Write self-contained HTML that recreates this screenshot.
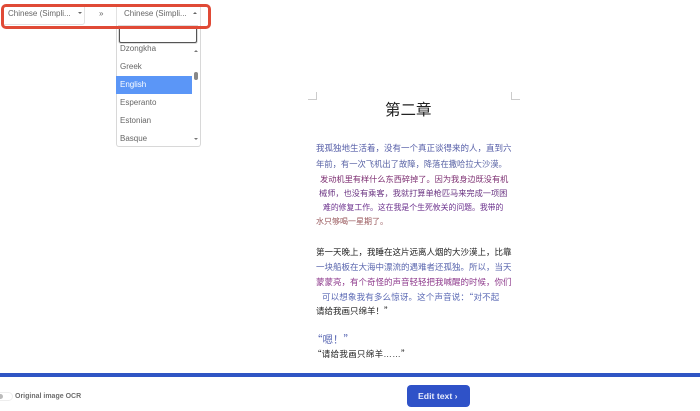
<!DOCTYPE html>
<html><head><meta charset="utf-8"><style>
html,body{margin:0;padding:0;background:#fff}
#p{position:relative;width:700px;height:411px;overflow:hidden;background:#fff;font-family:"Liberation Sans","Noto Sans CJK SC",sans-serif}
#p div{position:absolute;box-sizing:border-box}
.l{white-space:nowrap;font-family:"Noto Sans CJK SC","Liberation Sans",sans-serif;font-size:8.5px;line-height:12px;height:12px;filter:blur(.3px)}
.u{font-size:8px;line-height:12px;color:#666;white-space:nowrap;filter:blur(.25px)}
</style></head><body><div id="p">
<div style="left:3px;top:5px;width:82px;height:20px;border:1px solid #e2e2e2;border-top:0;border-left:0;border-radius:0 0 3px 0"></div>
<div class="u" style="left:8px;top:8px">Chinese (Simpli...</div>
<div style="left:78px;top:12px;border-left:2px solid transparent;border-right:2px solid transparent;border-top:2.5px solid #666"></div>
<div class="u" style="left:99px;top:8px">»</div>
<div style="left:116px;top:5px;width:85px;height:20px;border-left:1px solid #e2e2e2;border-right:1px solid #e2e2e2"></div>
<div class="u" style="left:124px;top:8px">Chinese (Simpli...</div>
<div style="left:193px;top:12px;border-left:2px solid transparent;border-right:2px solid transparent;border-bottom:2.5px solid #666"></div>
<div style="left:116px;top:25px;width:85px;height:122px;border:1px solid #d8d8d8;border-top:0;border-radius:0 0 3px 3px;background:#fff"></div>
<div style="left:119px;top:26px;width:78px;height:17px;border:1.5px solid #555;border-top:0;border-radius:0 0 2px 2px;box-shadow:0 0 0 1px #ddd"></div>
<div class="u" style="left:120px;top:43px">Dzongkha</div>
<div class="u" style="left:120px;top:61px">Greek</div>
<div style="left:116px;top:76px;width:76px;height:18px;background:#5b96f7"></div>
<div class="u" style="left:120px;top:79px;color:#fff">English</div>
<div class="u" style="left:120px;top:97px">Esperanto</div>
<div class="u" style="left:120px;top:115px">Estonian</div>
<div class="u" style="left:120px;top:133px">Basque</div>
<div style="left:194px;top:72px;width:4px;height:8px;background:#888;border-radius:2px"></div>
<div style="left:194px;top:50px;border-left:2px solid transparent;border-right:2px solid transparent;border-bottom:2.5px solid #777"></div>
<div style="left:194px;top:138px;border-left:2px solid transparent;border-right:2px solid transparent;border-top:2.5px solid #777"></div>
<div style="left:1px;top:4px;width:210px;height:25px;border:3px solid #e04a36;border-radius:5px"></div>

<div style="left:308px;top:92px;width:9px;height:8px;border-right:1px solid #ccc;border-bottom:1px solid #ccc"></div>
<div style="left:511px;top:92px;width:9px;height:8px;border-left:1px solid #ccc;border-bottom:1px solid #ccc"></div>
<div style="left:385px;top:99px;font-family:'Noto Sans CJK SC','Liberation Sans',sans-serif;font-size:15.5px;line-height:20px;color:#222;white-space:nowrap">第二章</div>

<div class="l" style="left:316px;top:142px;color:#565ea8">我孤独地生活着，没有一个真正谈得来的人，直到六</div>
<div class="l" style="left:316px;top:158px;color:#5a64a6;font-size:8.3px">年前，有一次飞机出了故障，降落在撒哈拉大沙漠。</div>
<div class="l" style="left:320px;top:173px;color:#7d2f72;font-size:8.2px">发动机里有样什么东西碎掉了。因为我身边既没有机</div>
<div class="l" style="left:319px;top:187px;color:#6b3583;font-size:8.2px">械师，也没有乘客，我就打算单枪匹马来完成一项困</div>
<div class="l" style="left:323px;top:202px;color:#6a2f8c;font-size:7.85px">难的修复工作。这在我是个生死攸关的问题。我带的</div>
<div class="l" style="left:316px;top:216px;color:#99585c;font-size:8px">水只够喝一星期了。</div>

<div class="l" style="left:316px;top:246px;color:#222">第一天晚上，我睡在这片远离人烟的大沙漠上，比靠</div>
<div class="l" style="left:316px;top:261px;color:#5a66ae">一块船板在大海中漂流的遇难者还孤独。所以，当天</div>
<div class="l" style="left:316px;top:276px;color:#8e3a8c">蒙蒙亮，有个奇怪的声音轻轻把我喊醒的时候，你们</div>
<div class="l" style="left:322px;top:291px;color:#5a68b4;letter-spacing:.15px">可以想象我有多么惊讶。这个声音说：“对不起</div>
<div class="l" style="left:316px;top:305px;color:#222">请给我画只绵羊！”</div>
<div class="l" style="left:312px;top:333px;color:#5a68b4;font-size:10.5px;height:14px;line-height:14px">“嗯！”</div>
<div class="l" style="left:313px;top:348px;color:#222;letter-spacing:.3px">“请给我画只绵羊<span style="font-family:'Liberation Sans',sans-serif">……</span>”</div>

<div style="left:0;top:373px;width:700px;height:4px;background:#2f55c4"></div>
<div style="left:-8px;top:392px;width:21px;height:9px;border:1px solid #eee;border-radius:5px"></div>
<div style="left:-2px;top:394px;width:5px;height:5px;background:#bbb;border-radius:3px"></div>
<div style="left:15px;top:391px;font-size:7px;line-height:12px;font-weight:bold;color:#6e6e6e;white-space:nowrap">Original image OCR</div>
<div style="left:407px;top:385px;width:63px;height:22px;background:#2f52c8;border-radius:4px"></div>
<div style="left:418px;top:390px;font-size:8.7px;line-height:12px;font-weight:bold;color:#e8ecfb;white-space:nowrap">Edit text ›</div>
</div></body></html>
